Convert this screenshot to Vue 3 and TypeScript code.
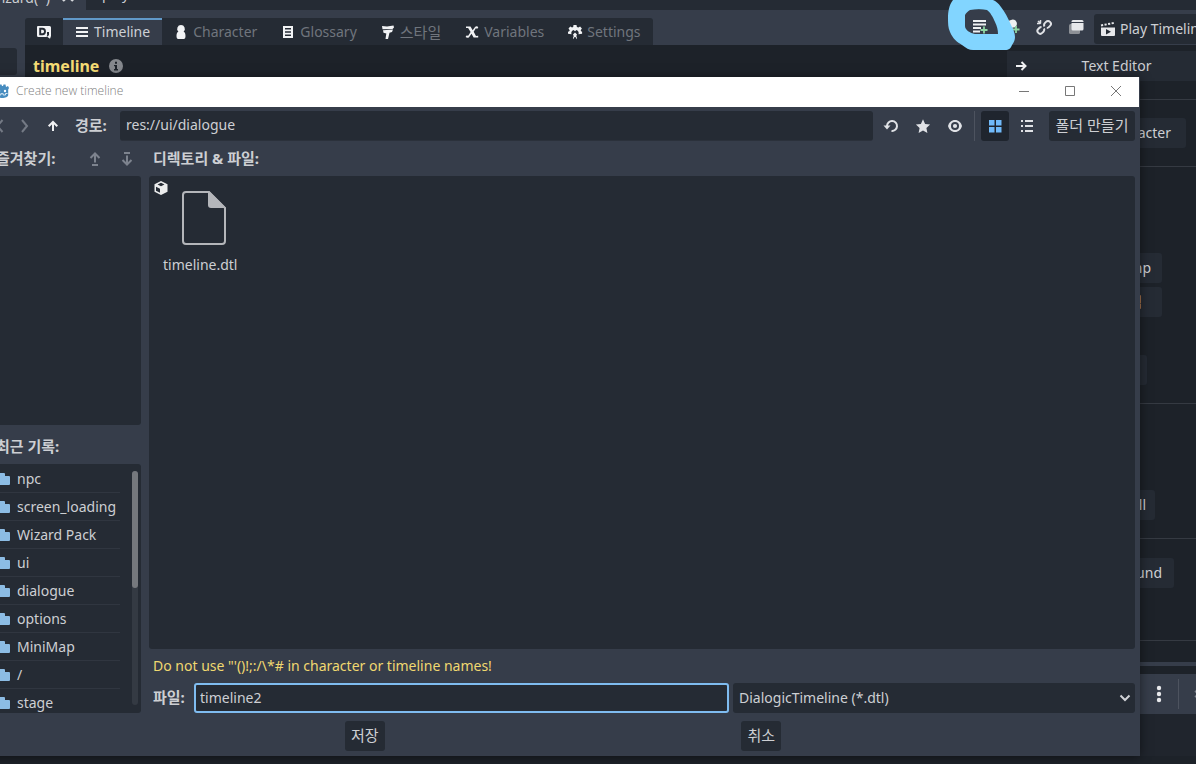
<script setup lang="ts">
import { ref } from 'vue'

interface Tab { id: string; label: string; korean?: boolean }

const tabs: Tab[] = [
  { id: 'home', label: '' },
  { id: 'timeline', label: 'Timeline' },
  { id: 'character', label: 'Character' },
  { id: 'glossary', label: 'Glossary' },
  { id: 'style', label: '스타일', korean: true },
  { id: 'variables', label: 'Variables' },
  { id: 'settings', label: 'Settings' },
]
const activeTab = ref('timeline')
const recent = ['npc', 'screen_loading', 'Wizard Pack', 'ui', 'dialogue', 'options', 'MiniMap', '/', 'stage']
const path = ref('res://ui/dialogue')
const fileName = ref('timeline2')
const filter = ref('dtl')
</script>

<template>
  <div class="workspace">
    <div class="scenes">
      <div class="scene current"><span>Wizard(*)</span>
        <svg width="12" height="12" viewBox="0 0 12 12"><path d="M1 1l10 10M11 1L1 11" stroke="#d8dade" stroke-width="2.4" /></svg>
      </div>
      <div class="scene"><span>player</span></div>
    </div>

    <header class="header">
      <nav class="tabs">
        <button v-for="t in tabs" :key="t.id" class="tab" :class="{ active: t.id === activeTab, korean: t.korean }" :aria-label="t.label || 'Dialogic'" @click="activeTab = t.id">
          <svg width="16" height="16" viewBox="0 0 16 16" fill="#f2f3f5">
            <template v-if="t.id === 'home'">
              <path d="M2 2h11.500a1.500 1.500 0 0 1 1.500 1.500V12l-1 2.800-2.500-1.800H2.500A1.500 1.500 0 0 1 1 11.500V3a1 1 0 0 1 1-1z" />
              <path d="M4.200 4.800h2.300a2.500 2.700 0 0 1 0 5.400H4.200z" fill="none" stroke="#252b34" stroke-width="1.900" />
              <path d="M11 8h2v3l-1.400 1.500h-1l.8-2H11z" fill="#252b34" />
            </template>
            <path v-else-if="t.id === 'timeline'" d="M2 3h12v2H2zM2 7h12v2H2zM2 11h12v2H2z" />
            <path v-else-if="t.id === 'character'" d="M8 1a3.800 3.800 0 0 0-2.600 6.600C4 8.600 3.500 10 3.500 12c0 2 .6 3 1.700 3h5.600c1.100 0 1.700-1 1.700-3 0-2-.5-3.400-1.900-4.400A3.800 3.800 0 0 0 8 1z" />
            <path v-else-if="t.id === 'glossary'" fill-rule="evenodd" d="M3 2h10v12H3zM5 4v1.400h6V4zM5 7.300v1.400h6V7.300zM5 10.600V12h6v-1.400z" />
            <path v-else-if="t.id === 'style'" d="M2 2l5 .5L13.500 1.500 14 3.500 12.500 5 2.500 5.300zM3 6.200l10-.8-1 2.700-2.500.7L8 15H5.500L6.300 9.500 3.500 8.700z" />
            <path v-else-if="t.id === 'variables'" d="M2 2.500h4.500L8.700 6.300 11 3c1-1 2.500-.9 3.300.2l-1 1.500-1.500-.4-2.100 3.500 2.300 4.200 2.200-.2v1.700H9.600L7.500 9.700l-2.300 3.200C4.200 14.200 2.600 14 1.600 13l.9-1.600 1.700.3 2.400-3.600-2.500-4H2z" />
            <path v-else d="M6.500 1h3l.4 2 1.500.6 1.700-1.100 1.800 2-1.200 1.700.4 1 1 .5v2l-3.600.5a3.500 3.500 0 0 0-2-4.200L8 7.300 6.500 6a3.500 3.500 0 0 0-2 4.200L1 9.700v-2l1.300-.5.4-1L1.500 4.500l1.800-2L5 3.600 6.200 3zM8 8.500l2 2-.7 1.500L10 14l-1 1.200v-2H7v2L6 14l.7-2L6 10.500z" />
          </svg>
          <span v-if="t.label">{{ t.label }}</span>
        </button>
      </nav>
      <div class="tools">
        <button class="tool" aria-label="New timeline">
          <svg width="16" height="16" viewBox="0 0 16 16"><path d="M1 2h13M1 5.500h13M1 9h8M1 12.500h7" stroke="#eef0f2" stroke-width="2" /><path d="M12 7.500v7M8.500 11h7" stroke="#8fd7a4" stroke-width="1.800" /></svg>
        </button>
        <button class="tool" aria-label="New character">
          <svg width="16" height="16" viewBox="0 0 16 16"><path d="M7 1a3.800 3.800 0 0 0-2.500 6.500C3 8.500 2.500 10 2.500 13h6V8.500h2A3.800 3.800 0 0 0 7 1z" fill="#eef0f2" /><path d="M12 7v7M8.500 10.500h7" stroke="#8fd7a4" stroke-width="1.800" /></svg>
        </button>
        <button class="tool" aria-label="References">
          <svg width="16" height="16" viewBox="0 0 16 16" fill="none" stroke="#e0e2e6" stroke-width="2"><path d="M8.500 7.500a3 3 0 0 1 .5-3.600l1-1a2.800 2.800 0 0 1 4 4l-1.200 1.200a2.800 2.800 0 0 1-2 .8M5.500 8a2.800 2.800 0 0 0-2 .8L2.300 10a2.600 2.600 0 0 0 3.900 3.900l1.200-1.200a3 3 0 0 0 .6-3.200" /><path d="M4.500 1v3M1 4.500h3M2 2l2.800 2.800" stroke-width="1.500" /></svg>
        </button>
        <button class="tool" aria-label="Windows">
          <svg width="16" height="16" viewBox="0 0 16 16"><rect x="1" y="5" width="11" height="10" rx="1.500" fill="#8d9096" /><path d="M5 1h9a1.500 1.500 0 0 1 1.500 1.500V3H3.500v-.5A1.500 1.500 0 0 1 5 1zM3.500 4h12v6a1.500 1.500 0 0 1-1.500 1.500H5A1.500 1.500 0 0 1 3.500 10z" fill="#e6e7ea" /></svg>
        </button>
        <button class="play">
          <svg width="16" height="16" viewBox="0 0 16 16"><path d="M1 6.500h14V14a1 1 0 0 1-1 1H2a1 1 0 0 1-1-1z" fill="#e6e7ea" /><path d="M1 4.500l14-2.800" stroke="#e6e7ea" stroke-width="2" stroke-dasharray="2.200 1.400" /><path d="M6 8l5 2.800-5 2.800z" fill="#252b34" /></svg>
          <span>Play Timeline</span>
        </button>
      </div>
    </header>

    <div class="body">
      <aside class="dock"><div class="dockbox"></div></aside>
      <main class="editor">
        <div class="current-name">
          <strong>timeline</strong>
          <svg width="14" height="14" viewBox="0 0 14 14"><circle cx="7" cy="7" r="7" fill="#85888d" /><path d="M6 2.800h2v2H6zM5 6h3v4h1v1.400H5V10h1V7.300H5z" fill="#1d2229" /></svg>
        </div>
        <section class="events">
          <button class="switch">
            <svg width="16" height="16" viewBox="0 0 16 16" fill="none" stroke="#f0f1f3" stroke-width="2"><path d="M3 8h9M8.500 4l4 4-4 4" /></svg>
            <span>Text Editor</span>
          </button>
          <div class="group first"><button class="event wide">Character</button></div>
          <div class="group flow"><button class="event jump">Jump</button><button class="event choice">선택</button><button class="event narrow">End</button></div>
          <div class="group logic"><button class="event call">Call</button></div>
          <div class="group visual"><button class="event sound">Background</button></div>
        </section>
      </main>
    </div>
    <div class="splitter"></div>
    <footer class="footer">
      <button class="more" aria-label="More"><svg width="16" height="20" viewBox="0 0 16 20" fill="#e8e9ec"><circle cx="8" cy="4" r="2.200" /><circle cx="8" cy="10" r="2.200" /><circle cx="8" cy="16" r="2.200" /></svg></button>
      <i class="rule"></i>
      <svg class="clipped" width="16" height="16" viewBox="0 0 16 16"><path d="M1 5l4 3-4 3" fill="none" stroke="#7d828b" stroke-width="2" /></svg>
    </footer>
    <div class="output"></div>

    <svg class="marker" width="72" height="54" viewBox="0 0 72 54"><path fill="#82d5ff" fill-rule="evenodd" d="M7 0C3 5 2 12 2 18c0 5 0 10 2 14 3 7 7 10 12 13 4 3 7 5 11 5h32c4 0 6-2 7-5 2-3 3-5 3-8 0-4-2-8-4-12C62 18 59 12 55 7 52 3 50 1 47 0zM24 10c6-1 12-1 17 0 3 2 6 7 8 12 2 4 3 8 3 12H29c-5-1-10-4-10-8V15c1-2 3-4 5-5z" /></svg>

    <section class="dialog" role="dialog" aria-label="Create new timeline">
      <div class="titlebar">
        <svg class="godot" width="16" height="16" viewBox="0 0 16 16"><path d="M2 5l1-2 2 1 .5-2.500h2L8 3h1l.5-1.500h2L12 4l2-1 1 2-.8 1.500V12c0 2-3 3-6 3s-6-1-6-3V6.500z" fill="#478cbf" /><path d="M2.500 10.500h2V12h2.300v-1.300h2.400V12h2.300v-1.500h2" fill="none" stroke="#d9e9f4" /><circle cx="5" cy="8" r="1.200" fill="#fff" /><circle cx="11" cy="8" r="1.200" fill="#fff" /></svg>
        <span>Create new timeline</span>
        <div class="caption">
          <button aria-label="Minimize"><svg width="12" height="12" viewBox="0 0 12 12"><path d="M1 6.500h10" stroke="#777" /></svg></button>
          <button aria-label="Maximize"><svg width="12" height="12" viewBox="0 0 12 12"><path d="M1.500 1.500h9v9h-9z" fill="none" stroke="#777" /></svg></button>
          <button aria-label="Close"><svg width="12" height="12" viewBox="0 0 12 12"><path d="M1 1l10 10M11 1L1 11" stroke="#777" /></svg></button>
        </div>
      </div>

      <div class="content">
        <div class="pathbar">
          <button class="ib back" aria-label="Back"><svg width="16" height="16" viewBox="0 0 16 16"><path d="M10.500 2l-5 6 5 6" fill="none" stroke="#747a85" stroke-width="2" /></svg></button>
          <button class="ib" aria-label="Forward"><svg width="16" height="16" viewBox="0 0 16 16"><path d="M5 2l5 6-5 6" fill="none" stroke="#747a85" stroke-width="2" /></svg></button>
          <button class="ib" aria-label="Up"><svg width="16" height="16" viewBox="0 0 16 16"><path d="M8 13V5M3.700 8.300L8 4l4.300 4.300" fill="none" stroke="#f0f1f3" stroke-width="2" /></svg></button>
          <label class="head" for="path">경로:</label>
          <input id="path" v-model="path" class="field" type="text" />
          <div class="icons">
            <button class="ib" aria-label="Refresh"><svg width="16" height="16" viewBox="0 0 16 16"><path d="M4 8a5 5 0 1 1 4.500 5" fill="none" stroke="#e0e2e6" stroke-width="2" /><path d="M.5 7.500h7L4 11.500z" fill="#e0e2e6" /></svg></button>
            <button class="ib" aria-label="Favorite"><svg width="16" height="16" viewBox="0 0 16 16"><path d="M8 1.300l2.100 4.600 5 .6-3.700 3.400 1 5L8 12.400l-4.400 2.500 1-5L.9 6.500l5-.6z" fill="#e0e2e6" /></svg></button>
            <button class="ib" aria-label="Hidden files"><svg width="16" height="16" viewBox="0 0 16 16"><path d="M8 2C4.500 2 2 4.500 1 8c1 3.500 3.500 6 7 6s6-2.500 7-6c-1-3.500-3.500-6-7-6z" fill="#e0e2e6" /><circle cx="8" cy="8" r="4" fill="#363d4a" /><circle cx="8" cy="8" r="2.100" fill="#e0e2e6" /></svg></button>
          </div>
          <i class="rule"></i>
          <div class="icons">
            <button class="ib pressed" aria-label="Grid view"><svg width="16" height="16" viewBox="0 0 16 16"><path d="M2 2h5.500v5.500H2zM9 2h5.500v5.500H9zM2 9h5.500v5.500H2zM9 9h5.500v5.500H9z" fill="#70bafa" /></svg></button>
            <button class="ib" aria-label="List view"><svg width="16" height="16" viewBox="0 0 16 16"><path d="M2 2h2v2H2zM6 2h8v2H6zM2 7h2v2H2zM6 7h8v2H6zM2 12h2v2H2zM6 12h8v2H6z" fill="#e0e2e6" /></svg></button>
          </div>
          <button class="btn folder">폴더 만들기</button>
        </div>

        <div class="columns">
          <div class="side">
            <div class="headrow">
              <span class="head">즐겨찾기:</span>
              <button class="ib move" aria-label="Move up"><svg width="16" height="16" viewBox="0 0 16 16"><path d="M8 11.500V3M3.500 7L8 2.500 12.500 7M5 14h6" fill="none" stroke="#7d838e" stroke-width="2" /></svg></button>
              <button class="ib" aria-label="Move down"><svg width="16" height="16" viewBox="0 0 16 16"><path d="M8 4.500V13M3.500 9L8 13.500 12.500 9M5 2h6" fill="none" stroke="#7d838e" stroke-width="2" /></svg></button>
            </div>
            <div class="panel"></div>
            <div class="headrow recent"><span class="head">최근 기록:</span></div>
            <div class="panel list">
              <ul>
                <li v-for="r in recent" :key="r"><button>
                  <svg width="16" height="16" viewBox="0 0 16 16"><path d="M2 2a1 1 0 0 0-1 1v10a1 1 0 0 0 1 1h13a1 1 0 0 0 1-1V6a1 1 0 0 0-1-1h-4V3a1 1 0 0 0-1-1z" fill="#8cbce4" /></svg>
                  <span>{{ r }}</span></button></li>
              </ul>
              <div class="track"><div class="thumb"></div></div>
            </div>
          </div>

          <div class="main">
            <div class="headrow files"><span class="head">디렉토리 &amp; 파일:</span></div>
            <div class="panel grid">
              <svg class="cube" width="16" height="16" viewBox="0 0 16 16"><path d="M8 1l6.500 3.200v7.600L8 15l-6.500-3.200V4.200z" fill="#eceded" /><path d="M8 2.800l3.500 1.700L8 6.200 4.500 4.500zM3 6.800l4 2v4L3 10.800z" fill="#252b34" /></svg>
              <button class="file">
                <svg width="48" height="56" viewBox="0 0 48 56"><path d="M6 2h23l16 16v33a3 3 0 0 1-3 3H6a3 3 0 0 1-3-3V5a3 3 0 0 1 3-3z" fill="none" stroke="#b4b6ba" stroke-width="2" /><path d="M28 1h1l17 17H31a3 3 0 0 1-3-3z" fill="#b4b6ba" /></svg>
                <span>timeline.dtl</span>
              </button>
            </div>
            <p class="warning">Do not use "'()!;:/\*# in character or timeline names!</p>
            <div class="filerow">
              <label class="head" for="file">파일:</label>
              <input id="file" v-model="fileName" class="field focus" type="text" />
              <div class="select">
                <select v-model="filter" aria-label="File type"><option value="dtl">DialogicTimeline (*.dtl)</option></select>
                <svg width="12" height="12" viewBox="0 0 12 12"><path d="M1.500 3.500L6 8l4.500-4.500" fill="none" stroke="#d0d2d6" stroke-width="2" /></svg>
              </div>
            </div>
          </div>
        </div>
        <div class="actions"><button class="btn">저장</button><button class="btn">취소</button></div>
      </div>
    </section>
  </div>
</template>

<style>
body { background: #1d2229; }
</style>

<style scoped>
* { box-sizing: border-box; }
.workspace { position: relative; display: flex; flex-direction: column; height: 100vh; overflow: hidden; background: #1d2229; color: #cdcfd3; font: 14px/20px "Noto Sans", "Noto Sans CJK KR", sans-serif; }
button, input, select { margin: 0; padding: 0; border: 0; background: none; color: inherit; font: inherit; outline: 0; }
svg { display: block; flex: none; }
.scenes { display: flex; flex: none; height: 10px; overflow: hidden; background: #252b34; }
.scene { display: flex; align-items: flex-end; justify-content: flex-end; gap: 12px; padding: 0 12px 6px 16px; }
.scene.current { width: 86px; padding-bottom: 2px; background: #363d4a; }
.scene span { flex: none; }
.scene svg { margin-bottom: 6px; }
.header { display: flex; flex: none; align-items: flex-end; height: 35px; padding-left: 25px; background: #363d4a; }
.tabs { display: flex; height: 27px; background: #252b34; border-radius: 3px 3px 0 0; }
.tab { display: flex; align-items: center; gap: 4px; padding: 0 11px 2px; color: #70757d; border-top: 2px solid transparent; white-space: nowrap; }
.tab + .tab { padding-right: 12px; }
.tab.active { background: #363d4a; border-top-color: #6199c9; color: #cdd0d5; }
.korean { font-size: 15px; }
.tools { display: flex; align-items: center; height: 35px; margin-left: auto; margin-right: -18px; }
.tool { display: grid; place-items: center; width: 32px; height: 30px; padding-bottom: 2px; }
.play { display: flex; align-items: center; gap: 4px; width: 120px; height: 30px; margin-top: 3px; margin-left: 2px; padding-left: 6px; background: #252b34; border-radius: 3px; white-space: nowrap; }
.body { display: flex; flex: 1; min-height: 0; }
.dock { width: 25px; padding: 3px 8px 0 0; background: #363d4a; }
.dockbox { height: 27px; background: #252b34; border-radius: 0 3px 3px 0; }
.editor { display: flex; flex: 1; justify-content: space-between; }
.current-name { display: flex; align-items: center; gap: 10px; height: 42px; padding-left: 8px; }
.current-name strong { color: #f5dc75; font-size: 16px; }
.events { width: 189px; padding-top: 6px; }
.switch { display: flex; align-items: center; width: 100%; height: 30px; padding-left: 6px; background: #252b34; }
.switch span { flex: 1; padding-left: 8px; }
.group { display: flex; flex-direction: column; align-items: flex-end; border-top: 1px solid #353a42; }
.event { height: 30px; padding: 0 12px; background: #252b34; border-radius: 3px; }
.first { height: 67px; margin-top: 18px; padding: 18px 10px 0 0; }
.wide { padding: 0 15px; }
.flow { height: 237px; gap: 4px; padding: 86px 34px 0 0; }
.jump { padding: 0 11px; }
.choice { padding: 0 20px; }
.narrow { margin: 34px 15px 0 0; }
.logic { height: 135px; padding: 86px 41px 0 0; }
.call { padding: 0 9px; }
.visual { height: 103px; padding: 19px 22px 0 0; border-bottom: 1px solid #353a42; }
.splitter { flex: none; height: 4px; margin-bottom: 8px; background: #363d4a; }
.footer { display: flex; flex: none; align-items: center; justify-content: flex-end; height: 40px; background: #363d4a; }
.more { width: 38px; display: grid; place-items: center; }
.rule { width: 1px; height: 30px; background: #4d535f; }
.clipped { margin: 0 -14px 0 15px; }
.output { flex: none; height: 50px; background: #20252d; border-bottom: 8px solid #1d2229; }
.marker { position: absolute; top: 0; right: 178px; }

.dialog { position: absolute; top: 77px; right: 56px; bottom: 8px; left: -16px; display: flex; flex-direction: column; background: #363d4a; box-shadow: 0 1px 10px rgba(0, 0, 0, .5); }
.titlebar { display: flex; flex: none; align-items: center; gap: 6px; height: 30px; margin-right: 1px; padding: 0 0 2px 10px; background: #fff; color: #808080; font: 300 12px/16px "Open Sans", sans-serif; }
.caption { display: flex; margin-left: auto; }
.caption button { display: grid; place-items: center; width: 46px; height: 28px; }
.content { display: flex; flex: 1; flex-direction: column; min-height: 0; padding: 4px 5px 5px 4px; }
.pathbar { display: flex; flex: none; height: 30px; align-items: center; }
.ib { display: grid; place-items: center; flex: none; width: 28px; height: 30px; border-radius: 3px; }
.back { width: 23px; }
.pressed { background: #1f252e; }
.head { color: #cdcfd3; font-size: 15px; font-weight: 700; white-space: nowrap; }
.pathbar .head { width: 45px; margin-left: 8px; padding-bottom: 2px; }
.pathbar .rule { margin: 0 6px 0 5px; }
.field { flex: 1; min-width: 0; height: 30px; padding: 0 6px 2px; background: #252b34; border-radius: 3px; border-bottom: 1px solid #2b313b; }
.icons { display: flex; gap: 4px; margin-left: 4px; }
.rule + .icons { margin-left: 0; }
.btn { height: 30px; padding: 0 6px 2px; background: #252b34; border-radius: 3px; font-size: 15px; white-space: nowrap; }
.folder { width: 86px; margin-left: 8px; }
.columns { display: flex; flex: 1; gap: 8px; min-height: 0; }
.side { display: flex; flex-direction: column; width: 153px; }
.main { display: flex; flex: 1; flex-direction: column; min-width: 0; }
.headrow { display: flex; flex: none; align-items: center; height: 35px; padding-left: 8px; }
.headrow .head { padding-bottom: 2px; }
.files { padding-left: 4px; }
.recent { height: 39px; padding-top: 4px; }
.move { margin: 0 4px 0 auto; }
.panel { flex: 1 1 0; min-height: 0; background: #252b34; border-radius: 3px; }
.list { display: flex; padding: 0 3px 0 6px; overflow: hidden; }
ul { flex: 1; margin: 0; padding: 1px 0 0; list-style: none; }
li { height: 28px; border-bottom: 1px solid #303640; }
li button { display: flex; align-items: center; gap: 7px; height: 28px; white-space: nowrap; }
.track { width: 6px; margin: 7px 0 8px 12px; background: #343a43; border-radius: 3px; }
.thumb { height: 50%; background: #75787d; border-radius: 3px; }
.grid { display: flex; align-items: flex-start; padding: 4px; }
.cube { margin-right: -6px; }
.file { display: flex; flex-direction: column; align-items: center; gap: 9px; padding: 10px 0 0; }
.file svg { margin-left: 8px; }
.warning { flex: none; margin: 0; padding: 7px 4px; color: #f0d870; }
.filerow { display: flex; flex: none; align-items: center; gap: 4px; }
.filerow .head { width: 41px; padding: 0 0 2px 4px; }
.filerow .field { flex: 523 1 0; }
.filerow .focus { border: 2px solid #7fbcf0; padding: 0 4px 2px; }
.select { display: grid; flex: 402 1 0; align-items: center; background: #252b34; border-radius: 3px; }
.select select { grid-area: 1 / 1; height: 30px; padding: 0 6px; appearance: none; }
.select svg { grid-area: 1 / 1; justify-self: end; margin-right: 4px; pointer-events: none; }
.actions { display: flex; flex: none; justify-content: space-evenly; margin-right: -3px; padding-top: 8px; }
</style>
